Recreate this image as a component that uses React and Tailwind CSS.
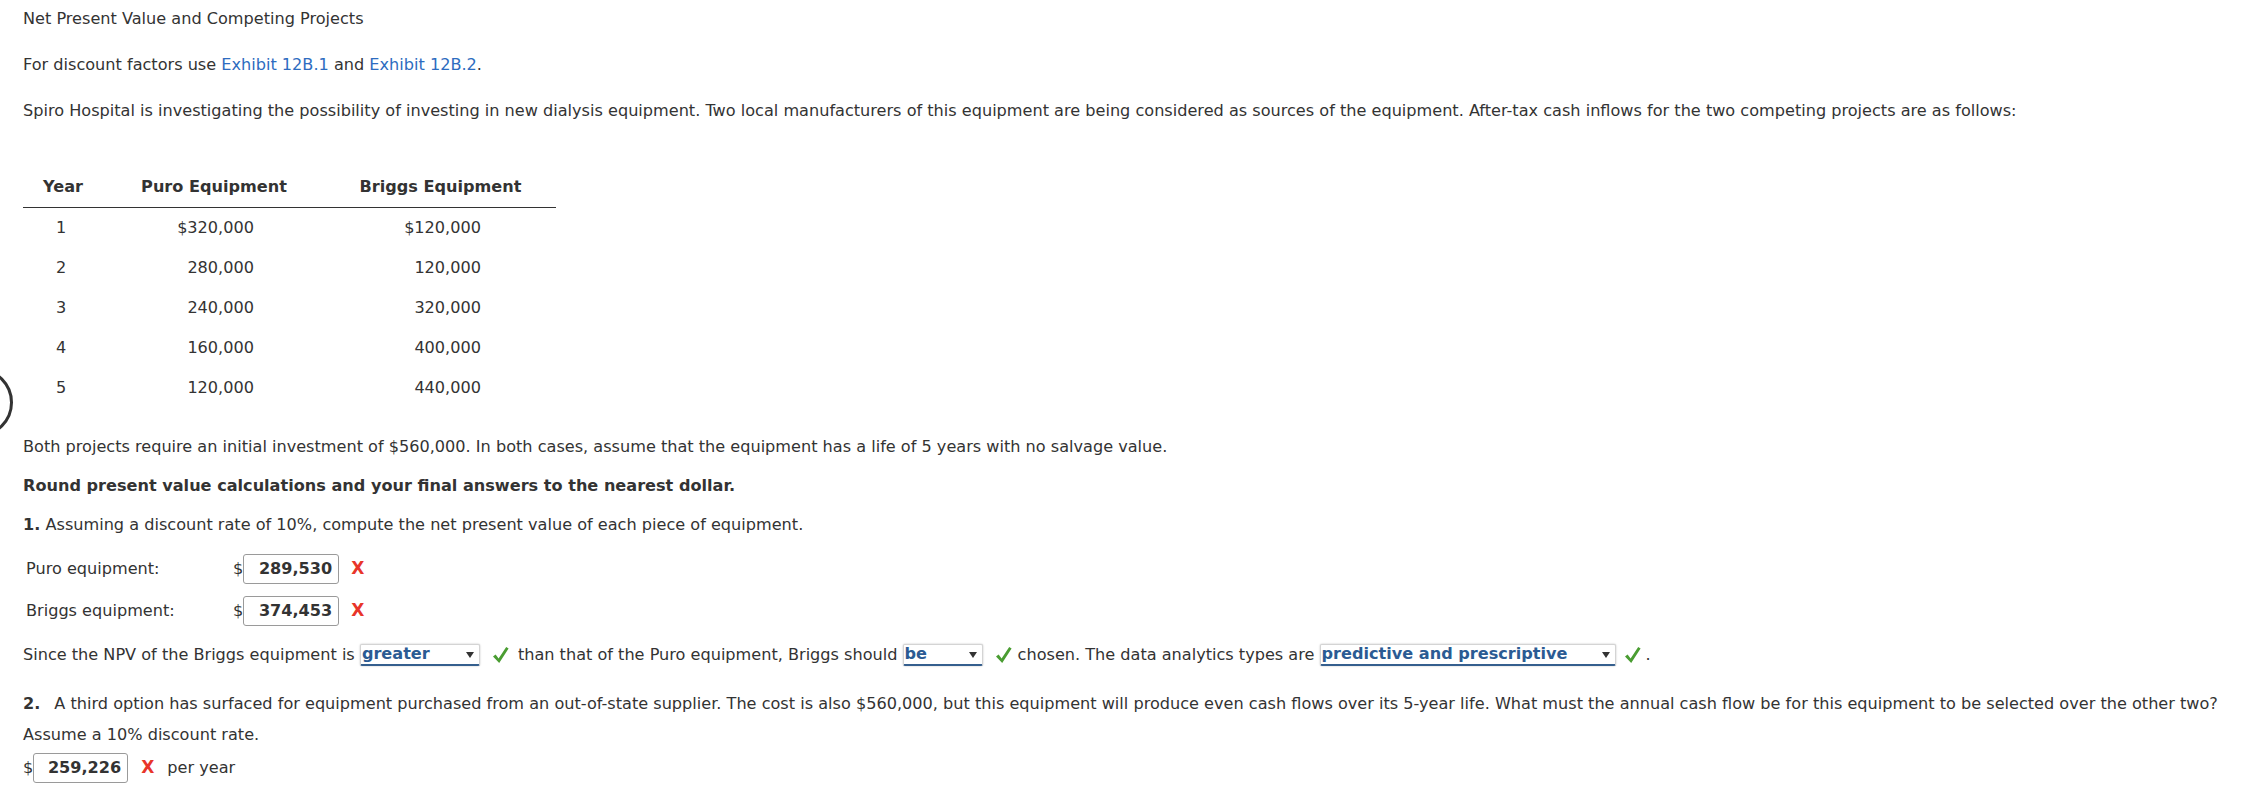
import React from "react";

function Check() {
  return (
    <svg width="17" height="18" viewBox="0 0 17 18" className="shrink-0">
      <path d="M1 10.5 L3.6 8.6 L6.6 12.6 L14.2 1 L16.6 2.6 L7.2 17 Z" fill="#4a9d32" />
    </svg>
  );
}

function Cross() {
  return <span className="font-bold text-[#e8352a] text-[17px] leading-none">X</span>;
}

function Dropdown({ value, width }) {
  return (
    <span
      className="inline-flex items-center justify-between h-[22px] border border-[#d4d4d4] border-b-2 border-b-[#355f8e] rounded-[2px] shadow-[0_0_2px_rgba(0,0,0,0.25)] bg-white pl-[1px] pr-[5px] align-middle"
      style={{ width }}
    >
      <span className="font-bold text-[#2b5b93] leading-none">{value}</span>
      <svg width="8" height="6" viewBox="0 0 8 6">
        <path d="M0 0 L8 0 L4 6 Z" fill="#333" />
      </svg>
    </span>
  );
}

function AnswerBox({ value, width }) {
  return (
    <span
      className="inline-flex items-center justify-end h-[30px] border border-[#9a9a9a] rounded-[3px] bg-white pr-[6px] font-bold text-[#333]"
      style={{ width }}
    >
      {value}
    </span>
  );
}

const rows = [
  ["1", "$320,000", "$120,000"],
  ["2", "280,000", "120,000"],
  ["3", "240,000", "320,000"],
  ["4", "160,000", "400,000"],
  ["5", "120,000", "440,000"],
];

export default function App() {
  return (
    <div className="relative w-[2242px] h-[792px] overflow-hidden bg-white text-[#333] text-[16.13px] font-['DejaVu_Sans',sans-serif]">
      <div className="absolute left-[-56px] top-[368px] w-[69px] h-[69px] rounded-full border-[3px] border-[#333]" />
      <div className="pl-[23px] pt-[7px]">
        <div className="leading-6">Net Present Value and Competing Projects</div>
        <div className="leading-6 mt-[22px]">
          For discount factors use <span className="text-[#2d6cc0]">Exhibit 12B.1</span> and{" "}
          <span className="text-[#2d6cc0]">Exhibit 12B.2</span>.
        </div>
        <div className="leading-6 mt-[22px]">
          Spiro Hospital is investigating the possibility of investing in new dialysis equipment. Two local manufacturers of this equipment are being considered as sources of the equipment. After-tax cash inflows for the two competing projects are as follows:
        </div>

        <div className="mt-[45px] w-[533px]">
          <div className="grid grid-cols-[80px_222px_231px] h-[40px] items-center border-b-[1.5px] border-[#333] font-bold">
            <div className="text-center">Year</div>
            <div className="text-center">Puro Equipment</div>
            <div className="text-center">Briggs Equipment</div>
          </div>
          {rows.map((r) => (
            <div key={r[0]} className="grid grid-cols-[80px_222px_231px] h-[40px] items-center">
              <div className="text-center pr-[4px]">{r[0]}</div>
              <div className="text-right pr-[71px]">{r[1]}</div>
              <div className="text-right pr-[75px]">{r[2]}</div>
            </div>
          ))}
        </div>

        <div className="leading-6 mt-[27px]">
          Both projects require an initial investment of $560,000. In both cases, assume that the equipment has a life of 5 years with no salvage value.
        </div>
        <div className="leading-6 mt-[15px] font-bold">
          Round present value calculations and your final answers to the nearest dollar.
        </div>
        <div className="leading-6 mt-[15px]">
          <span className="font-bold">1.</span> Assuming a discount rate of 10%, compute the net present value of each piece of equipment.
        </div>

        <div className="flex items-center h-[30px] mt-[17px]">
          <span className="w-[210px] pl-[3px]">Puro equipment:</span>
          <span>$</span>
          <AnswerBox value="289,530" width={96} />
          <span className="ml-[12px]"><Cross /></span>
        </div>
        <div className="flex items-center h-[30px] mt-[12px]">
          <span className="w-[210px] pl-[3px]">Briggs equipment:</span>
          <span>$</span>
          <AnswerBox value="374,453" width={96} />
          <span className="ml-[12px]"><Cross /></span>
        </div>

        <div className="flex items-center h-[30px] mt-[14px] whitespace-pre">
          <span>Since the NPV of the Briggs equipment is </span>
          <Dropdown value="greater" width={120} />
          <span className="ml-[12px]"><Check /></span>
          <span className="ml-[9px]">than that of the Puro equipment, Briggs should </span>
          <Dropdown value="be" width={80} />
          <span className="ml-[12px]"><Check /></span>
          <span className="ml-[6px]">chosen. The data analytics types are </span>
          <Dropdown value="predictive and prescriptive" width={296} />
          <span className="ml-[8px]"><Check /></span>
          <span className="ml-[5px]">.</span>
        </div>

        <div className="leading-6 mt-[22px] whitespace-nowrap">
          <span className="font-bold">2.</span>
          <span className="ml-[14px]">A third option has surfaced for equipment purchased from an out-of-state supplier. The cost is also $560,000, but this equipment will produce even cash flows over its 5-year life. What must the annual cash flow be for this equipment to be selected over the other two?</span>
        </div>
        <div className="leading-6 mt-[7px]">Assume a 10% discount rate.</div>
        <div className="flex items-center h-[30px] mt-[6px]">
          <span>$</span>
          <AnswerBox value="259,226" width={95} />
          <span className="ml-[13px]"><Cross /></span>
          <span className="ml-[13px]">per year</span>
        </div>
      </div>
    </div>
  );
}
